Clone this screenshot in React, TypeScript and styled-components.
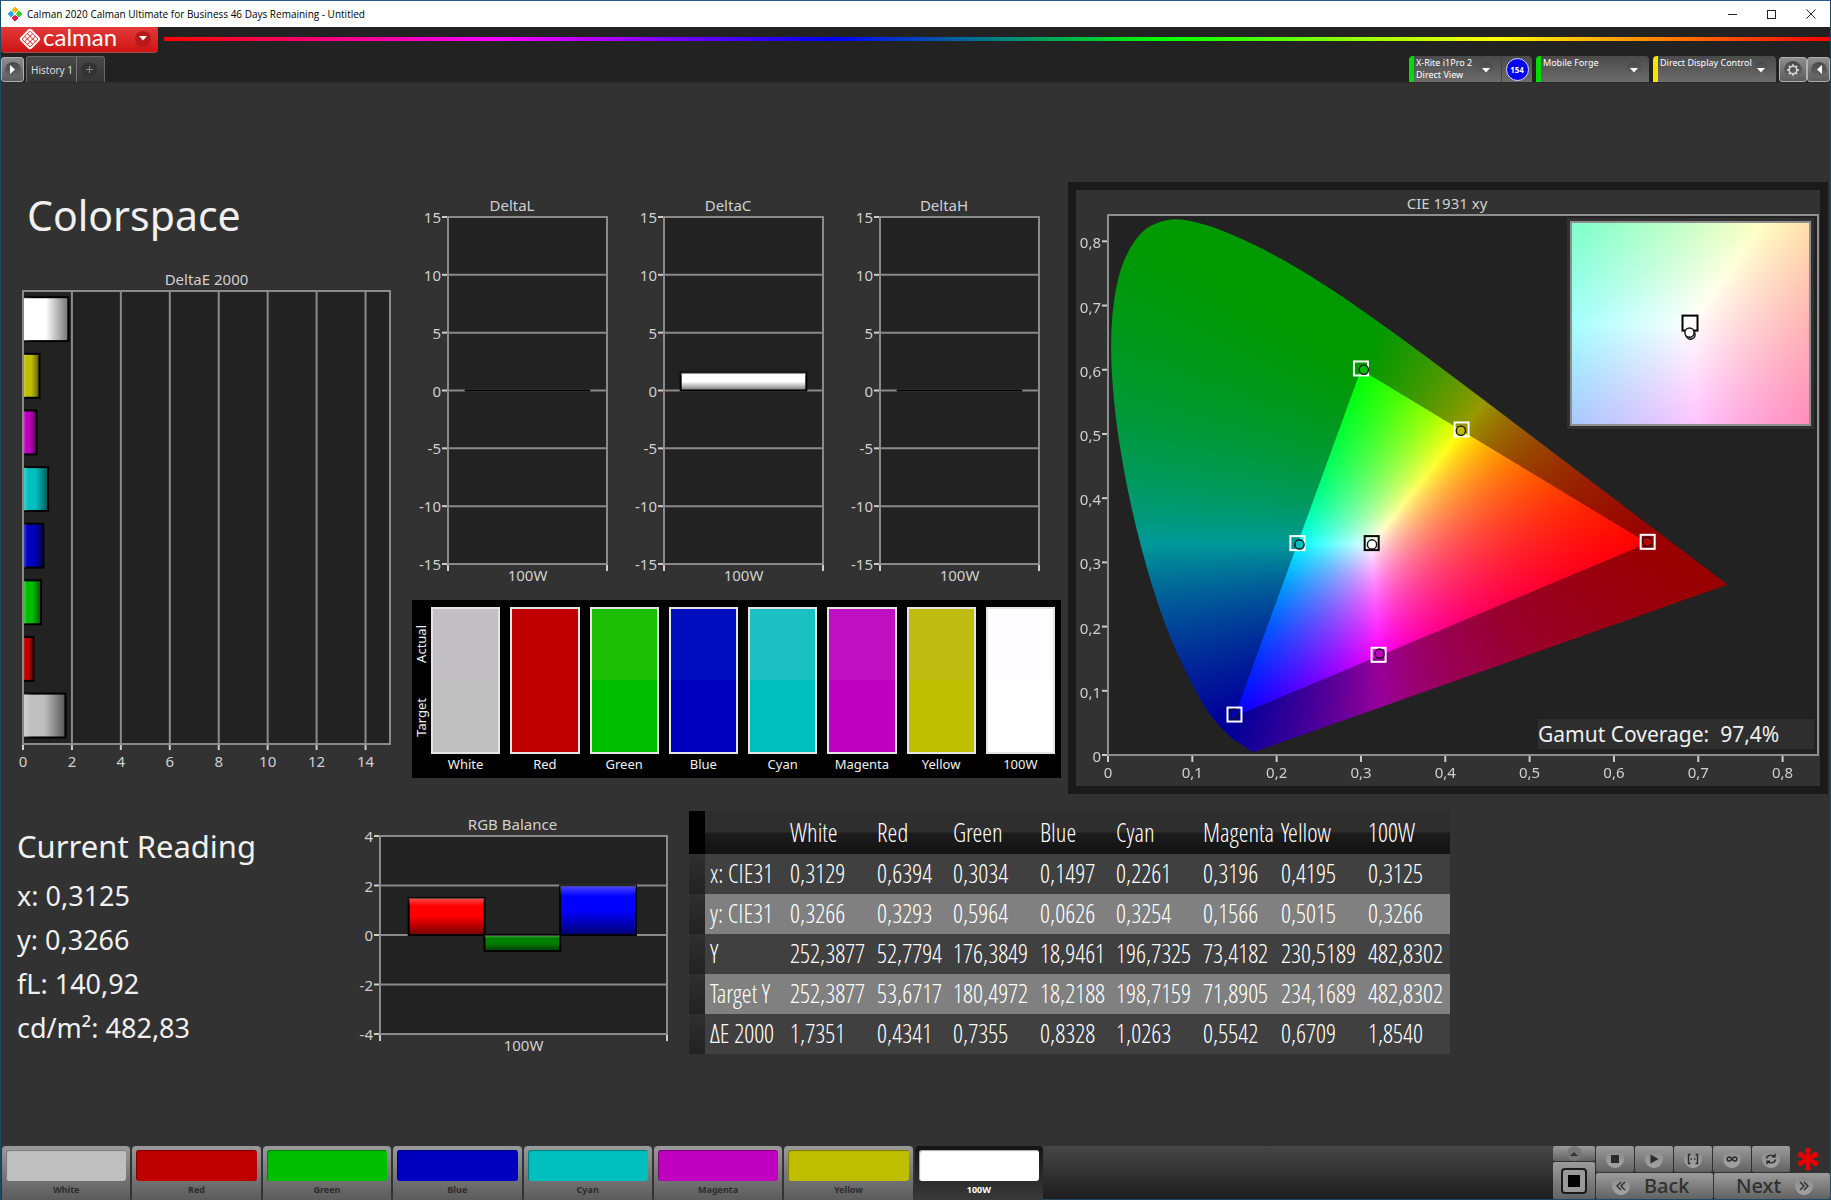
import React, { useLayoutEffect, useRef, useState } from "react";
import styled, { createGlobalStyle } from "styled-components";

const FONT = '"Noto Sans", "Open Sans", sans-serif';
const NARROW = '"Open Sans Condensed Light", "Open Sans Condensed", "Noto Sans", sans-serif';

const GlobalStyle = createGlobalStyle`
  * { box-sizing: border-box; }
  body { margin: 0; background: #323232; color: #f0f0f0; font-family: ${FONT}; }
  h1, h2, h3, p, dl, dd, dt, figure { margin: 0; font-weight: 400; }
  button { font-family: inherit; cursor: pointer; }
`;

/* ---------- window frame ---------- */

const Window = styled.div`
  min-height: 100vh;
  display: flex;
  flex-direction: column;
  border: 1px solid #1d4b66;
  border-top-color: #2b5a8c;
  background: #323232;
`;

const TitleBar = styled.header`
  display: flex;
  align-items: center;
  height: 26px;
  padding-left: 7px;
  background: #fff;
  color: #000;
  font-family: "Open Sans", "Noto Sans", sans-serif;
  font-size: 10px;
`;

const TitleText = styled.span`
  flex: 1;
  padding-left: 5px;
`;

const CaptionButton = styled.button`
  width: 39px;
  height: 24px;
  display: grid;
  place-items: center;
  padding: 0;
  border: 0;
  background: none;
`;

const BrandBar = styled.div`
  display: flex;
  align-items: flex-start;
  gap: 6px;
  height: 29px;
  background: #222;
`;

const BrandButton = styled.button`
  display: flex;
  align-items: center;
  width: 157px;
  height: 26px;
  padding: 0 7px 2px 18px;
  gap: 2px;
  border: 0;
  border-bottom: 1px solid #9a5050;
  border-radius: 0 0 4px 4px;
  background: linear-gradient(#e23a3a, #cf1414);
  color: #fff;
`;

const BrandName = styled.span`
  flex: 1;
  text-align: left;
  font-family: Lato, sans-serif;
  font-size: 24px;
  line-height: 24px;
  padding-bottom: 4px;
`;

const Spectrum = styled.div`
  flex: 1;
  height: 4px;
  margin-top: 10px;
  background: linear-gradient(90deg, #f00, #f0f 20%, #00f 40%, #0f0 60%, #ff0 80%, #f00);
`;

const Round = styled.span<{ $size?: number; $tone?: string }>`
  flex: none;
  display: grid;
  place-items: center;
  width: ${(p) => p.$size ?? 16}px;
  height: ${(p) => p.$size ?? 16}px;
  border-radius: 50%;
  background: ${(p) => p.$tone ?? "linear-gradient(#484848, #6a6a6a)"};
`;

const ToolRow = styled.div`
  display: flex;
  align-items: flex-end;
  height: 27px;
  padding-bottom: 1px;
  background: #222;
  box-shadow: inset 0 -1px #2a2a2a;
`;

const SmallKey = styled.button<{ $width: number }>`
  display: grid;
  place-items: center;
  width: ${(p) => p.$width}px;
  height: 25px;
  padding: 0;
  border: 1px solid #b0b0b0;
  border-radius: 3px;
  background: linear-gradient(#8e8e8e, #5c5c5c);
`;

const Tabs = styled.div`
  display: flex;
  height: 26px;
  margin-left: 2px;
  border: 1px solid #666;
  border-bottom: 0;
  border-radius: 3px 3px 0 0;
  background: linear-gradient(#484848, #353535);
`;

const Tab = styled.button`
  display: flex;
  align-items: center;
  padding: 0 3px 0 4px;
  border: 0;
  background: none;
  color: #ddd;
  font-size: 10px;
  & + & { border-left: 1px solid #777; padding: 0 7px 0 4px; }
`;

const Spacer = styled.div`
  flex: 1;
`;

const Devices = styled.div`
  display: flex;
  gap: 4px;
  margin-right: 3px;
`;

const Device = styled.div<{ $mark: string; $width: number }>`
  display: flex;
  width: ${(p) => p.$width}px;
  height: 26px;
  border-left: 5px solid ${(p) => p.$mark};
  border-radius: 4px 4px 0 0;
  background: linear-gradient(#4a4a4a, #6c6c6c);
`;

const DeviceButton = styled.button`
  flex: 1;
  display: flex;
  padding: 1px 7px 0 2px;
  border: 0;
  background: none;
  color: #fff;
  font-size: 9px;
  line-height: 12px;
  text-align: left;
  white-space: nowrap;
  ${Round} { margin: 5px 0 0 auto; }
`;

const Meter = styled.span`
  display: grid;
  place-items: center;
  width: 31px;
  border-left: 1px solid #444;
`;

const MeterBadge = styled.span`
  display: grid;
  place-items: center;
  width: 23px;
  height: 23px;
  border: 1px solid #dcdcff;
  border-radius: 50%;
  background: #0000f4;
  color: #fff;
  font: 700 8px ${FONT};
`;

/* ---------- workspace ---------- */

const Workspace = styled.main`
  flex: 1;
  padding-top: 99px;
`;

const UpperGrid = styled.div`
  display: grid;
  grid-template-columns: 389fr 656fr 760fr;
  padding: 0 2px 0 22px;
`;

const LeftColumn = styled.section`
  padding: 9px 22px 0 0;
`;

const MiddleColumn = styled.section`
  display: flex;
  flex-direction: column;
  justify-content: space-between;
  margin-right: 7px;
  padding: 13px 0 16px;
`;

const PageTitle = styled.h1`
  padding-left: 4px;
  font-size: 41px;
  line-height: 48px;
`;

const DeltaEFigure = styled.figure`
  margin-top: 30px;
`;

const ChartTitle = styled.figcaption`
  color: #d0d0d0;
  font-size: 15px;
  line-height: 20px;
  text-align: center;
`;

const Plot = styled.svg<{ $height: number; $left?: number }>`
  display: block;
  overflow: visible;
  width: calc(100% - ${(p) => p.$left ?? 0}px);
  height: ${(p) => p.$height}px;
  margin: 2px 0 0 ${(p) => p.$left ?? 0}px;
  background: #222;
  outline: 2px solid #8a8a8a;
  outline-offset: -1px;
  text { fill: #d0d0d0; font-size: 15px; font-family: ${FONT}; }
`;

const DeltaRow = styled.div`
  display: grid;
  grid-template-columns: repeat(3, 1fr);
  column-gap: 26px;
  padding: 0 22px 0 5px;
`;

const SwatchPanel = styled.section`
  display: flex;
  height: 178px;
  padding: 7px 6px 0 0;
  background: #000;
`;

const SideLabels = styled.div`
  display: flex;
  justify-content: space-around;
  width: 19px;
  height: 148px;
  writing-mode: vertical-rl;
  font-size: 13px;
  line-height: 19px;
  span { transform: rotate(180deg); }
`;

const SwatchGrid = styled.div`
  flex: 1;
  display: grid;
  grid-template-columns: repeat(8, 1fr);
  column-gap: 10px;
`;

const Swatch = styled.div`
  font-size: 13px;
  line-height: 20px;
  text-align: center;
`;

const SwatchFill = styled.div<{ $actual: string; $target: string }>`
  height: 147px;
  border: 2px solid #e4e4e4;
  background: linear-gradient(${(p) => p.$actual} 50%, ${(p) => p.$target} 50%);
`;

const CiePanel = styled.figure`
  border: 8px solid #1a1a1a;
  padding: 3px 2px 31px 0;
  background: #323232;
`;

const CieArea = styled.div`
  position: relative;
  height: 540px;
  margin: 2px 0 0 32px;
  background: #222;
`;

const GamutCanvas = styled.canvas`
  position: absolute;
  inset: 0;
  width: 100%;
  height: 100%;
`;

const CieOverlay = styled.svg`
  position: absolute;
  inset: 0;
  width: 100%;
  height: 100%;
  overflow: visible;
  outline: 2px solid #8f8f8f;
  outline-offset: -1px;
  text { fill: #d0d0d0; font-size: 15px; font-family: ${FONT}; }
`;

const Inset = styled.div`
  position: absolute;
  top: 6px;
  right: 7px;
  width: 34%;
  height: 38%;
  border: 2px solid #8f8f8f;
  box-shadow: 0 0 0 3px #303030;
`;

const InsetMarks = styled.svg`
  position: absolute;
  inset: 0;
  width: 100%;
  height: 100%;
`;

const Coverage = styled.p`
  position: absolute;
  right: 4px;
  bottom: 6px;
  width: 276px;
  background: #2e2e2e;
  font-size: 21px;
  line-height: 30px;
  white-space: pre;
`;

const LowerGrid = styled.div`
  display: grid;
  grid-template-columns: 341fr 309fr 783fr 380fr;
  padding: 17px 0 0 16px;
`;

const ReadingTitle = styled.h2`
  font-size: 31px;
  line-height: 44px;
  padding-top: 13px;
  margin-bottom: 6px;
`;

const Reading = styled.div`
  display: flex;
  gap: 7px;
  font-size: 27px;
  line-height: 44px;
`;

const RgbFigure = styled.section`
  padding-top: 3px;
`;

const TableWrap = styled.div`
  padding-left: 22px;
`;

const DataTable = styled.table`
  width: 100%;
  table-layout: fixed;
  border-collapse: collapse;
  color: #fff;
  font-family: ${NARROW};
  font-size: 25px;
  th, td { padding: 0 0 2px 5px; font-weight: 400; text-align: left; white-space: nowrap; line-height: 30px; }
`;

const HeadRow = styled.tr`
  height: 43px;
  background: linear-gradient(#2e2e2e 49%, #1c1c1c 51%, #121212);
`;

const Stub = styled.td<{ $head?: boolean }>`
  background: ${(p) => (p.$head ? "#000" : "linear-gradient(#2f2f2f, #222)")};
`;

const DataRow = styled.tr`
  height: 40px;
  background: #404040;
  &:nth-child(even) { background: #808080; }
`;

/* ---------- footer ---------- */

const Footer = styled.footer`
  display: flex;
  height: 53px;
  padding-left: 1px;
`;

const PatternList = styled.div`
  display: grid;
  grid-template-columns: repeat(8, 1fr);
  gap: 2px;
  width: 1041px;
  background: #333;
`;

const Pattern = styled.button<{ $on: boolean }>`
  padding: 4px;
  border: 0;
  border-radius: 4px;
  background: ${(p) => (p.$on ? "linear-gradient(#141414, #3c3c3c)" : "linear-gradient(#9a9a9a, #585858)")};
  color: ${(p) => (p.$on ? "#fff" : "#2c2c2c")};
  font-size: 9px;
  font-weight: 700;
  line-height: 18px;
`;

const PatternColor = styled.span<{ $color: string }>`
  display: block;
  height: 31px;
  border-radius: 3px;
  background: ${(p) => p.$color};
  box-shadow: inset 1px 1px 1px rgba(0, 0, 0, 0.35);
`;

const FooterFill = styled.div`
  flex: 1;
  background: linear-gradient(#464646, #1e1e1e);
`;

const WindowKeys = styled.div`
  display: flex;
  flex-direction: column;
  gap: 1px;
  width: 42px;
  margin-right: 1px;
`;

const Key = styled.button<{ $grow?: boolean }>`
  flex: ${(p) => (p.$grow ? "1" : "none")};
  display: flex;
  align-items: center;
  justify-content: center;
  padding: 0;
  border: 0;
  border-radius: 2px;
  background: linear-gradient(#9c9c9c, #626262);
  color: #303030;
`;

const Transport = styled.div`
  display: grid;
  grid-template-columns: 117px 116px;
  grid-template-rows: 26px 26px;
  gap: 1px;
`;

const TransportTop = styled.div`
  grid-column: 1 / 3;
  display: grid;
  grid-template-columns: repeat(5, 38px) 1fr;
  column-gap: 1px;
  place-items: stretch;
`;

const Star = styled.span`
  display: grid;
  place-items: center;
  padding-right: 5px;
`;

const NavKey = styled(Key)<{ $lead: number }>`
  justify-content: flex-start;
  gap: 14px;
  padding-left: ${(p) => p.$lead}px;
  font-size: 20px;
  font-weight: 500;
  line-height: 26px;
`;

/* ---------- icons ---------- */

const Caret = () => (
  <svg width="8" height="5" aria-hidden="true"><path d="M0 0h8L4 4.5z" fill="#fff" /></svg>
);

const AppIcon = () => (
  <svg width="14" height="14" viewBox="0 0 14 14" aria-hidden="true">
    <path d="M7 0l3 3-3 3-3-3z" fill="#f5b81c" stroke="#f5b81c" />
    <path d="M3 4l3 3-3 3-3-3z" fill="#2aa9e0" stroke="#2aa9e0" />
    <path d="M11 4l3 3-3 3-3-3z" fill="#3ad12b" stroke="#3ad12b" />
    <path d="M7 8l3 3-3 3-3-3z" fill="#e5174f" stroke="#e5174f" />
    <path d="M7 5.2L8.8 7 7 8.8 5.2 7z" fill="#fff" />
  </svg>
);

const BrandMark = () => (
  <svg width="22" height="22" viewBox="0 0 22 22" aria-hidden="true">
    <g transform="rotate(45 11 11)">
      <rect x="4" y="4" width="14" height="14" rx="2" fill="none" stroke="#fff" strokeWidth="2" />
      {[0, 1, 2].map((r) => [0, 1, 2].map((c) => (
        <rect key={`${r}${c}`} x={5.6 + c * 3.8} y={5.6 + r * 3.8} width="3.1" height="3.1" rx="0.6" fill="#fff" />
      )))}
    </g>
  </svg>
);

const GearIcon = () => (
  <svg width="14" height="14" viewBox="0 0 14 14" aria-hidden="true">
    <g stroke="#d8d8d8" strokeWidth="1.8">
      {[0, 45, 90, 135].map((a) => <path key={a} d="M7 1.2V3M7 11v1.8" transform={`rotate(${a} 7 7)`} />)}
      <circle cx="7" cy="7" r="3.8" fill="none" strokeWidth="1.5" />
    </g>
  </svg>
);

const Arrow = ({ left }: { left?: boolean }) => (
  <svg width="6" height="9" aria-hidden="true"><path d={left ? "M6 0v9L1 4.5z" : "M0 0v9l5-4.5z"} fill="#fff" /></svg>
);

const Chevrons = ({ next }: { next?: boolean }) => (
  <svg width="10" height="10" viewBox="0 0 10 10" fill="none" stroke="#333" strokeWidth="1.5" aria-hidden="true">
    <path d={next ? "M1 1l4 4-4 4M5 1l4 4-4 4" : "M5 1L1 5l4 4M9 1L5 5l4 4"} />
  </svg>
);

const TransportIcon = ({ kind }: { kind: string }) => (
  <svg width="12" height="12" viewBox="0 0 12 12" fill="none" stroke="#2a2a2a" strokeWidth="1.4" aria-hidden="true">
    {kind === "Stop" && <rect x="2" y="2" width="8" height="8" fill="#2a2a2a" stroke="none" />}
    {kind === "Play" && <path d="M2.5 1.5v9L10.5 6z" fill="#2a2a2a" stroke="none" />}
    {kind === "Range" && <path d="M3.5 1.5h-2v9h2M8.5 1.5h2v9h-2M3.6 6h1.4M7 6h1.4" />}
    {kind === "Loop" && <path d="M6 6C5 4.6 4.2 4 3.2 4a2 2 0 000 4C4.2 8 5 7.4 6 6s1.8-2 2.8-2a2 2 0 010 4C7.8 8 7 7.4 6 6z" />}
    {kind === "Repeat" && <path d="M1.5 5.5a4.5 3.5 0 018-2M10.5 6.5a4.5 3.5 0 01-8 2M10 .8v3H7M2 11.2v-3h3" />}
  </svg>
);

const StarIcon = () => (
  <svg width="24" height="24" viewBox="-12 -12 24 24" aria-hidden="true">
    {[0, 60, 120, 180, 240, 300].map((a) => (
      <path key={a} d="M-1.2 0L-2.2 -10.5H2.2L1.2 0z" fill="#e60000" stroke="#e60000" transform={`rotate(${a})`} />
    ))}
  </svg>
);

/* ---------- data ---------- */

const COLORS: Record<string, string> = {
  White: "#bfbfbf", Red: "#bf0000", Green: "#00bf00", Blue: "#0000bf",
  Cyan: "#00bfbf", Magenta: "#bf00bf", Yellow: "#bfbf00", "100W": "#ffffff",
};
const ACTUAL: Record<string, string> = {
  White: "#c1bfc2", Red: "#bf0000", Green: "#1dbf05", Blue: "#000dbf",
  Cyan: "#1cbfc2", Magenta: "#bf0fc2", Yellow: "#bfbc11", "100W": "#fdfcff",
};
const NAMES = Object.keys(COLORS);
const DELTA_E = [1.7351, 0.4341, 0.7355, 0.8328, 1.0263, 0.5542, 0.6709, 1.854];

const ROWS: [string, string[]][] = [
  ["x: CIE31", ["0,3129", "0,6394", "0,3034", "0,1497", "0,2261", "0,3196", "0,4195", "0,3125"]],
  ["y: CIE31", ["0,3266", "0,3293", "0,5964", "0,0626", "0,3254", "0,1566", "0,5015", "0,3266"]],
  ["Y", ["252,3877", "52,7794", "176,3849", "18,9461", "196,7325", "73,4182", "230,5189", "482,8302"]],
  ["Target Y", ["252,3877", "53,6717", "180,4972", "18,2188", "198,7159", "71,8905", "234,1689", "482,8302"]],
  ["ΔE 2000", ["1,7351", "0,4341", "0,7355", "0,8328", "1,0263", "0,5542", "0,6709", "1,8540"]],
];
const COLUMN_WIDTHS = [16, 80, 87, 76, 87, 76, 87, 78, 87, 87];

const READINGS = [["x:", "0,3125"], ["y:", "0,3266"], ["fL:", "140,92"], ["cd/m²:", "482,83"]];

const LOCUS: [number, number][] = [
  [0.1741, 0.005], [0.1733, 0.0048], [0.1714, 0.0051], [0.1689, 0.0069], [0.1644, 0.0109],
  [0.1566, 0.0177], [0.144, 0.0297], [0.1241, 0.0578], [0.1096, 0.0868], [0.0913, 0.1327],
  [0.0687, 0.2007], [0.0454, 0.295], [0.0235, 0.4127], [0.0082, 0.5384], [0.0039, 0.6548],
  [0.0139, 0.7502], [0.0389, 0.812], [0.0743, 0.8338], [0.1142, 0.8262], [0.1547, 0.8059],
  [0.1929, 0.7816], [0.2296, 0.7543], [0.2658, 0.7243], [0.3016, 0.6923], [0.3373, 0.6589],
  [0.3731, 0.6245], [0.4087, 0.5896], [0.4441, 0.5547], [0.4788, 0.5202], [0.5125, 0.4866],
  [0.5448, 0.4544], [0.5752, 0.4242], [0.6029, 0.3965], [0.627, 0.3725], [0.6482, 0.3514],
  [0.6658, 0.334], [0.6915, 0.3083], [0.714, 0.2859], [0.73, 0.27], [0.7347, 0.2653],
];
const X_MAX = 0.842;
const Y_MAX = 0.841;

const MARKS: { name: string; target: [number, number]; actual: [number, number] }[] = [
  { name: "Red", target: [0.64, 0.332], actual: [0.6394, 0.332] },
  { name: "Green", target: [0.3, 0.602], actual: [0.3034, 0.6] },
  { name: "Blue", target: [0.15, 0.063], actual: [0.1497, 0.064] },
  { name: "Cyan", target: [0.2246, 0.33], actual: [0.2271, 0.328] },
  { name: "Magenta", target: [0.3209, 0.156], actual: [0.322, 0.158] },
  { name: "Yellow", target: [0.4193, 0.507], actual: [0.4185, 0.505] },
  { name: "100W", target: [0.3127, 0.33], actual: [0.3131, 0.328] },
];

/* ---------- chromaticity painting ---------- */

function paint(canvas: HTMLCanvasElement, x0: number, x1: number, y0: number, y1: number, full: boolean) {
  const ctx = canvas.getContext("2d");
  if (!ctx) return;
  const { width: w, height: h } = canvas;
  const image = ctx.createImageData(w, h);
  for (let j = 0; j < h; j++) {
    const y = y1 - ((j + 0.5) / h) * (y1 - y0);
    for (let i = 0; i < w; i++) {
      const x = x0 + ((i + 0.5) / w) * (x1 - x0);
      const X = x / y;
      const Z = (1 - x - y) / y;
      const r = 3.2406 * X - 1.5372 - 0.4986 * Z;
      const g = -0.9689 * X + 1.8758 + 0.0415 * Z;
      const b = 0.0557 * X - 0.204 + 1.057 * Z;
      const m = Math.max(r, g, b);
      const k = full && Math.min(r, g, b) < 0 ? 153 : 255;
      const o = (j * w + i) * 4;
      image.data[o] = k * Math.max(0, r / m);
      image.data[o + 1] = k * Math.max(0, g / m);
      image.data[o + 2] = k * Math.max(0, b / m);
      image.data[o + 3] = 255;
    }
  }
  ctx.putImageData(image, 0, 0);
  if (full) {
    const p = LOCUS.map(([x, y]) => [((x - x0) / (x1 - x0)) * w, ((y1 - y) / (y1 - y0)) * h]);
    ctx.globalCompositeOperation = "destination-in";
    ctx.beginPath();
    ctx.moveTo(p[0][0], p[0][1]);
    // Catmull-Rom spline, so the curve passes through every tabulated point
    for (let i = 0; i < p.length - 1; i++) {
      const a = p[Math.max(i - 1, 0)];
      const b = p[i];
      const c = p[i + 1];
      const d = p[Math.min(i + 2, p.length - 1)];
      ctx.bezierCurveTo(
        b[0] + (c[0] - a[0]) / 6, b[1] + (c[1] - a[1]) / 6,
        c[0] - (d[0] - b[0]) / 6, c[1] - (d[1] - b[1]) / 6,
        c[0], c[1],
      );
    }
    ctx.closePath();
    ctx.fill();
    ctx.globalCompositeOperation = "source-over";
  }
}

function Chromaticity(props: { x: [number, number]; y: [number, number]; full?: boolean; label: string }) {
  const ref = useRef<HTMLCanvasElement>(null);
  useLayoutEffect(() => {
    if (ref.current) paint(ref.current, props.x[0], props.x[1], props.y[0], props.y[1], !!props.full);
  }, []);
  return <GamutCanvas ref={ref} width={props.full ? 1420 : 240} height={props.full ? 1080 : 200} role="img" aria-label={props.label} />;
}

/* ---------- charts ---------- */

const pct = (v: number) => `${v * 100}%`;

const Shade = ({ id, vertical }: { id: string; vertical?: boolean }) => (
  <linearGradient id={id} x1="0" y1="0" x2={vertical ? "0" : "1"} y2={vertical ? "1" : "0"}>
    <stop offset="0" stopColor="#fff" stopOpacity="0.3" />
    <stop offset="0.22" stopColor="#fff" stopOpacity="0" />
    <stop offset="0.5" stopColor="#000" stopOpacity="0" />
    <stop offset="1" stopColor="#000" stopOpacity="0.55" />
  </linearGradient>
);

function DeltaEChart() {
  const order = NAMES.map((n, i) => ({ name: n, value: DELTA_E[i] })).reverse();
  return (
    <DeltaEFigure>
      <ChartTitle>DeltaE 2000</ChartTitle>
      <Plot $height={453}>
        <defs><Shade id="shade-e" /></defs>
        {[0, 2, 4, 6, 8, 10, 12, 14].map((t) => (
          <svg key={t} x={pct(t / 15)} overflow="visible">
            {t > 0 && <line y2="100%" stroke="#8a8a8a" strokeWidth="2" />}
            <svg y="100%" overflow="visible">
              <line y2="6" stroke="#ccc" strokeWidth="2" />
              <text y="23" textAnchor="middle">{t}</text>
            </svg>
          </svg>
        ))}
        {order.map((b, i) => {
          const box = { x: 0, y: pct((i + 0.11) / 8), width: pct(b.value / 15), height: pct(0.775 / 8) };
          return (
            <g key={b.name}>
              <rect {...box} fill={COLORS[b.name]} stroke="#000" strokeWidth="2" />
              <rect {...box} fill="url(#shade-e)" />
            </g>
          );
        })}
        <line y2="100%" stroke="#8a8a8a" strokeWidth="2" />
      </Plot>
    </DeltaEFigure>
  );
}

interface Bar { x: number; w: number; value: number; color: string }

function ValueChart(props: { id: string; title: string; ticks: number[]; max: number; height: number; left: number; bars: Bar[] }) {
  const at = (v: number) => pct((props.max - v) / (2 * props.max));
  return (
    <figure>
      <ChartTitle>{props.title}</ChartTitle>
      <Plot $height={props.height} $left={props.left}>
        <defs><Shade id={props.id} vertical /></defs>
        {props.ticks.map((t) => (
          <svg key={t} y={at(t)} overflow="visible">
            <line x2="100%" stroke="#8a8a8a" strokeWidth="2" />
            <line x1="-6" x2="0" stroke="#ccc" strokeWidth="2" />
            <text x="-7" y="6" textAnchor="end">{t}</text>
          </svg>
        ))}
        {props.bars.map((b, i) => {
          if (b.value === 0) {
            return <line key={i} x1={pct(b.x)} x2={pct(b.x + b.w)} y1="50%" y2="50%" stroke="#000" strokeWidth="2" />;
          }
          const box = {
            x: pct(b.x), width: pct(b.w),
            y: at(Math.max(b.value, 0)), height: pct(Math.abs(b.value) / (2 * props.max)),
          };
          return (
            <g key={i}>
              <rect {...box} fill={b.color} stroke="#000" strokeWidth="2" />
              <rect {...box} fill={`url(#${props.id})`} />
            </g>
          );
        })}
        <svg y="100%" overflow="visible">
          <line y2="7" stroke="#ccc" strokeWidth="2" />
          <text x="50%" y="17" textAnchor="middle">100W</text>
          <svg x="100%" overflow="visible"><line y2="7" stroke="#ccc" strokeWidth="2" /></svg>
        </svg>
      </Plot>
    </figure>
  );
}

const DELTA_TICKS = [15, 10, 5, 0, -5, -10, -15];

function CieChart() {
  const steps = [0, 1, 2, 3, 4, 5, 6, 7, 8];
  const label = (s: number) => (s === 0 ? "0" : `0,${s}`);
  return (
    <CiePanel>
      <ChartTitle>CIE 1931 xy</ChartTitle>
      <CieArea>
        <Chromaticity full x={[0, X_MAX]} y={[0, Y_MAX]} label="Chromaticity diagram" />
        <CieOverlay>
          {steps.map((s) => (
            <svg key={s} x={pct(s / 10 / X_MAX)} y="100%" overflow="visible">
              <line y2="7" stroke="#ccc" strokeWidth="2" />
              <text y="23" textAnchor="middle">{label(s)}</text>
            </svg>
          ))}
          {steps.map((s) => (
            <svg key={s} y={pct(1 - s / 10 / Y_MAX)} overflow="visible">
              <line x1="-6" x2="0" stroke="#ccc" strokeWidth="2" />
              <text x="-7" y="7" textAnchor="end">{label(s)}</text>
            </svg>
          ))}
          {MARKS.map((m) => (
            <g key={m.name}>
              <svg x={pct(m.target[0] / X_MAX)} y={pct(1 - m.target[1] / Y_MAX)} overflow="visible">
                <rect x="-7" y="-7" width="14" height="14" fill="none" stroke={m.name === "100W" ? "#000" : "#fff"} strokeWidth="2" />
              </svg>
              <svg x={pct(m.actual[0] / X_MAX)} y={pct(1 - m.actual[1] / Y_MAX)} overflow="visible">
                <circle r="4.6" fill={COLORS[m.name]} stroke="#111" strokeWidth="1.4" />
              </svg>
            </g>
          ))}
        </CieOverlay>
        <Inset>
          <Chromaticity x={[0.2862, 0.3392]} y={[0.302, 0.356]} label="White point detail" />
          <InsetMarks>
            <svg x="49.5%" y="50%" overflow="visible">
              <circle cx="1" cy="11" r="4.6" fill="#bfbfbf" stroke="#111" strokeWidth="1.4" />
              <rect x="-7" y="-8" width="15" height="15" fill="none" stroke="#000" strokeWidth="2" />
              <circle cx="0" cy="9" r="4.6" fill="#fff" stroke="#111" strokeWidth="1.4" />
            </svg>
          </InsetMarks>
        </Inset>
        <Coverage>Gamut Coverage:  97,4%</Coverage>
      </CieArea>
    </CiePanel>
  );
}

/* ---------- page ---------- */

export default function App() {
  const [selected, setSelected] = useState("100W");
  return (
    <>
      <GlobalStyle />
      <Window>
        <TitleBar>
          <AppIcon />
          <TitleText>Calman 2020 Calman Ultimate for Business 46 Days Remaining - Untitled</TitleText>
          <CaptionButton aria-label="Minimize">
            <svg width="9" height="9"><path d="M0 4.5h9" stroke="#222" /></svg>
          </CaptionButton>
          <CaptionButton aria-label="Maximize">
            <svg width="9" height="9"><rect x=".5" y=".5" width="8" height="8" fill="none" stroke="#222" /></svg>
          </CaptionButton>
          <CaptionButton aria-label="Close">
            <svg width="10" height="10"><path d="M.5 .5l9 9M9.5 .5l-9 9" stroke="#222" /></svg>
          </CaptionButton>
        </TitleBar>

        <BrandBar>
          <BrandButton>
            <BrandMark />
            <BrandName>calman</BrandName>
            <Round $tone="#b81a1a"><Caret /></Round>
          </BrandButton>
          <Spectrum />
        </BrandBar>

        <ToolRow>
          <SmallKey $width={23} aria-label="Expand history"><Round><Arrow /></Round></SmallKey>
          <Tabs>
            <Tab>History 1</Tab>
            <Tab aria-label="Add history">
              <Round $tone="#333">
                <svg width="7" height="7"><path d="M3.5 0v7M0 3.5h7" stroke="#888" /></svg>
              </Round>
            </Tab>
          </Tabs>
          <Spacer />
          <Devices>
            <Device $mark="#00dc00" $width={123}>
              <DeviceButton><span>X-Rite i1Pro 2<br />Direct View</span><Round><Caret /></Round></DeviceButton>
              <Meter><MeterBadge>154</MeterBadge></Meter>
            </Device>
            <Device $mark="#00dc00" $width={113}>
              <DeviceButton>Mobile Forge<Round><Caret /></Round></DeviceButton>
            </Device>
            <Device $mark="#f0e800" $width={123}>
              <DeviceButton>Direct Display Control<Round><Caret /></Round></DeviceButton>
            </Device>
          </Devices>
          <SmallKey $width={28} aria-label="Settings"><Round $size={18}><GearIcon /></Round></SmallKey>
          <SmallKey $width={23} aria-label="Collapse panel"><Round><Arrow left /></Round></SmallKey>
        </ToolRow>

        <Workspace>
          <UpperGrid>
            <LeftColumn>
              <PageTitle>Colorspace</PageTitle>
              <DeltaEChart />
            </LeftColumn>

            <MiddleColumn>
              <DeltaRow>
                {["DeltaL", "DeltaC", "DeltaH"].map((title) => (
                  <ValueChart
                    key={title} id={title} title={title} ticks={DELTA_TICKS} max={15} height={347} left={31}
                    bars={[{ x: 0.105, w: 0.79, value: title === "DeltaC" ? 1.55 : 0, color: "#fff" }]}
                  />
                ))}
              </DeltaRow>
              <SwatchPanel>
                <SideLabels><span>Actual</span><span>Target</span></SideLabels>
                <SwatchGrid>
                  {NAMES.map((n) => (
                    <Swatch key={n}><SwatchFill $actual={ACTUAL[n]} $target={COLORS[n]} />{n}</Swatch>
                  ))}
                </SwatchGrid>
              </SwatchPanel>
            </MiddleColumn>

            <CieChart />
          </UpperGrid>

          <LowerGrid>
            <section>
              <ReadingTitle>Current Reading</ReadingTitle>
              <dl>
                {READINGS.map(([k, v]) => (
                  <Reading key={k}><dt>{k}</dt><dd>{v}</dd></Reading>
                ))}
              </dl>
            </section>

            <RgbFigure>
              <ValueChart
                id="rgb" title="RGB Balance" ticks={[4, 2, 0, -2, -4]} max={4} height={198} left={22}
                bars={[
                  { x: 0.1, w: 0.264, value: 1.5, color: "#f00" },
                  { x: 0.364, w: 0.264, value: -0.65, color: "#008000" },
                  { x: 0.628, w: 0.264, value: 2, color: "#00f" },
                ]}
              />
            </RgbFigure>

            <TableWrap>
              <DataTable>
                <colgroup>
                  {COLUMN_WIDTHS.map((w, i) => <col key={i} style={{ width: pct(w / 761) }} />)}
                </colgroup>
                <thead>
                  <HeadRow>
                    <Stub $head /><th aria-label="Measure" />
                    {NAMES.map((n) => <th key={n} scope="col">{n}</th>)}
                  </HeadRow>
                </thead>
                <tbody>
                  {ROWS.map(([head, cells]) => (
                    <DataRow key={head}>
                      <Stub />
                      <th scope="row">{head}</th>
                      {cells.map((c, i) => <td key={i}>{c}</td>)}
                    </DataRow>
                  ))}
                </tbody>
              </DataTable>
            </TableWrap>
          </LowerGrid>
        </Workspace>

        <Footer>
          <PatternList>
            {NAMES.map((n) => (
              <Pattern key={n} $on={n === selected} onClick={() => setSelected(n)}>
                <PatternColor $color={COLORS[n]} />{n}
              </Pattern>
            ))}
          </PatternList>
          <FooterFill />
          <WindowKeys>
            <Key aria-label="Show more">
              <Round $size={15} $tone="#777"><svg width="8" height="4"><path d="M0 4h8L4 0z" fill="#333" /></svg></Round>
            </Key>
            <Key $grow aria-label="Pattern window">
              <svg width="28" height="28">
                <rect x="2" y="2" width="24" height="24" rx="3" fill="#999" stroke="#1a1a1a" strokeWidth="2" />
                <rect x="8" y="8" width="12" height="12" fill="#000" />
              </svg>
            </Key>
          </WindowKeys>
          <Transport>
            <TransportTop>
              {["Stop", "Play", "Range", "Loop", "Repeat"].map((k) => (
                <Key key={k} aria-label={k}>
                  <Round $size={18} $tone="linear-gradient(#8a8a8a, #a4a4a4)"><TransportIcon kind={k} /></Round>
                </Key>
              ))}
              <Star><StarIcon /></Star>
            </TransportTop>
            <NavKey $lead={16}>
              <Round $size={18} $tone="linear-gradient(#8a8a8a, #a4a4a4)"><Chevrons /></Round>Back
            </NavKey>
            <NavKey $lead={22}>
              Next<Round $size={18} $tone="linear-gradient(#8a8a8a, #a4a4a4)"><Chevrons next /></Round>
            </NavKey>
          </Transport>
        </Footer>
      </Window>
    </>
  );
}
